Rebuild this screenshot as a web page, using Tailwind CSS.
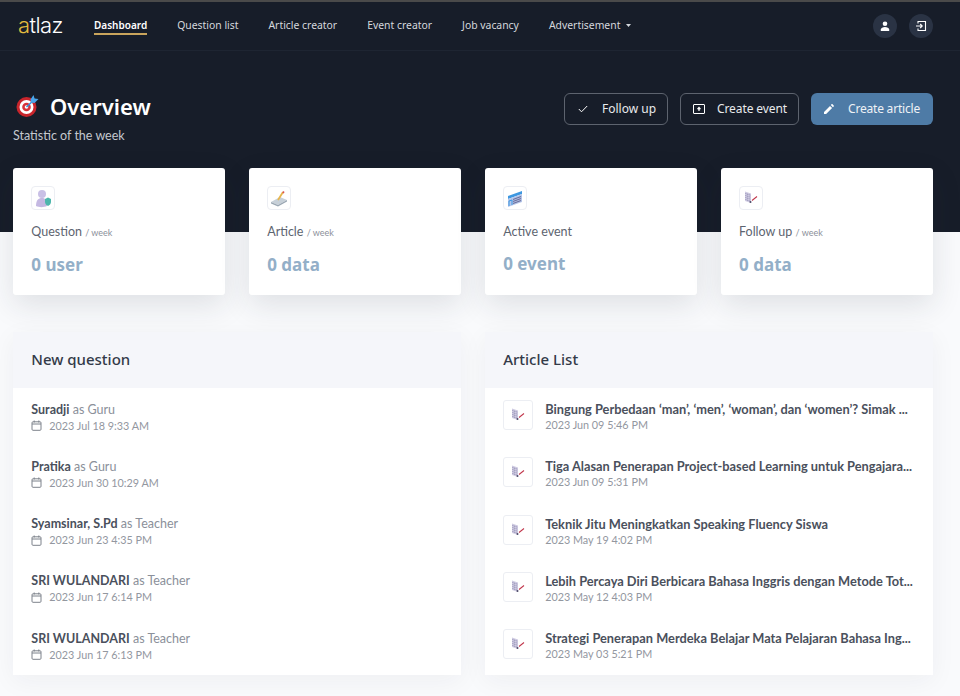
<!DOCTYPE html>
<html lang="en">
<head>
  <meta charset="UTF-8" />
  <title>Dashboard - Atlaz</title>
  <script src="https://cdn.jsdelivr.net/npm/@tailwindcss/browser@4"></script>
</head>
<body class="bg-[#f9fafc] font-['Lato',sans-serif] h-[696px] overflow-hidden">
  <!-- dark header -->
  <div class="bg-[#171d29] h-[232px] border-t-2 border-[#4a4a4a]">
    <nav class="h-[49px] flex items-center border-b border-[#1e2532] pl-[18px] pr-[27px]">
      <a class="font-['Inter',sans-serif] text-[22px] leading-none tracking-[-0.6px] font-light text-white w-[76px] -mt-[3px]"><span class="text-[#e3bd3f]">a</span>tlaz</a>
      <div class="flex items-center gap-[30px] text-[10.400px] leading-[15px] text-[#d5d8dd] font-['Noto_Sans',sans-serif] -mt-[2px]">
        <a class="relative text-[10px] font-semibold text-white">Dashboard<span class="absolute left-0 right-0 -bottom-[2px] h-[2px] bg-[#c9a45c]"></span></a>
        <a>Question list</a>
        <a>Article creator</a>
        <a>Event creator</a>
        <a>Job vacancy</a>
        <a class="flex items-center gap-[6px]">Advertisement
          <svg width="5" height="3" viewBox="0 0 5 3"><path d="M0 0h5L2.500 3z" fill="#d5d8dd"/></svg>
        </a>
      </div>
      <div class="ml-auto flex gap-[12px]">
        <button class="w-6 h-6 rounded-full bg-[#2a3344] flex items-center justify-center">
          <svg width="10" height="10" viewBox="0 0 10 10" fill="#fff"><circle cx="5" cy="2.800" r="2.300"/><path d="M0.800 10V8.400C0.800 6.900 3 6 5 6s4.200 0.900 4.200 2.400V10z"/></svg>
        </button>
        <button class="w-6 h-6 rounded-full bg-[#2a3344] flex items-center justify-center">
          <svg width="12" height="12" viewBox="0 0 12 12" fill="none" stroke="#fff" stroke-width="1.100"><path d="M3 3.500V1.500h7.500v9H3v-2"/><path d="M1 6h6M5.200 4l2 2-2 2"/></svg>
        </button>
      </div>
    </nav>

    <div class="flex justify-between items-start pl-[13px] pr-[27px] pt-[41px]">
      <div>
        <div class="flex items-center gap-[10px] pl-[3px]">
          <svg width="24" height="24" viewBox="0 0 24 24">
            <circle cx="10.500" cy="13" r="10" fill="#c9252c"/>
            <circle cx="10.500" cy="13" r="7" fill="#fff"/>
            <circle cx="10.500" cy="13" r="4.300" fill="#d8343a"/>
            <circle cx="10.500" cy="13" r="1.800" fill="#fff"/>
            <path d="M10.500 13L19 5" stroke="#3a8fd8" stroke-width="1.600"/>
            <path d="M14.500 5.500L17.500 1l1 3.500 4 .5-4 4-3.500-.5z" fill="#4aa5ea"/>
          </svg>
          <h1 class="font-['Noto_Sans',sans-serif] text-[22px] leading-[28px] font-semibold text-white">Overview</h1>
        </div>
        <p class="text-[12.500px] leading-[18px] mt-[7px] text-[#c4c8cf]">Statistic of the week</p>
      </div>
      <div class="flex gap-3 text-[12px] text-[#e8eaed] font-['Noto_Sans',sans-serif] mt-px">
        <button class="h-8 w-[104px] border border-[#5d636e] rounded-md flex items-center gap-[14px] pl-[13px]">
          <svg width="10" height="8" viewBox="0 0 10 8" fill="none" stroke="#fff" stroke-width="1"><path d="M0.800 4l2.700 2.800L9.200 1"/></svg>
          Follow up
        </button>
        <button class="h-8 w-[119px] border border-[#5d636e] rounded-md flex items-center gap-[12px] pl-[12px] tracking-[-0.1px]">
          <svg width="12" height="10" viewBox="0 0 12 10" fill="none" stroke="#fff" stroke-width="1"><rect x="0.500" y="0.500" width="11" height="9" rx="0.500"/><path d="M6 7V3.800M4.500 5.200L6 3.500l1.500 1.700" stroke-width="1.200"/></svg>
          Create event
        </button>
        <button class="h-8 w-[122px] bg-[#4e7ba6] rounded-md flex items-center gap-[14px] pl-[13px] text-[#eef2f6] tracking-[-0.2px]">
          <svg width="10" height="10" viewBox="0 0 10 10" fill="#fff"><path d="M0 10V7.900L6 1.900 8.100 4 2.100 10zM6.800 1.100L7.800 0.100a.4.4 0 0 1 .5 0L9.900 1.700a.4.4 0 0 1 0 .5L8.900 3.200z"/></svg>
          Create article
        </button>
      </div>
    </div>
  </div>

  <!-- stat cards -->
  <div class="grid grid-cols-4 gap-[24px] pl-[13.300px] pr-[27px] -mt-[64px] relative">
    <div class="bg-white rounded-[3px] h-[127px] px-[18px] pt-[18px] shadow-[0_10px_30px_rgba(30,40,60,0.12)]">
      <div class="w-6 h-6 border border-[#eceef3] rounded-[4px] flex items-center justify-center">
        <svg width="17" height="19" viewBox="0 0 17 19"><circle cx="7" cy="5" r="4" fill="#c9c0e6"/><path d="M1 17c0-6 2.500-8 6-8s5 2 5 8c-3 1.500-8 1.500-11 0z" fill="#c4b8e2"/><path d="M10 10l3-1.500 3 1.500v3c0 2-1.500 3.200-3 4-1.500-.8-3-2-3-4z" fill="#4db6ac"/></svg>
      </div>
      <p class="text-[12.500px] leading-[18px] mt-[13px] text-[#5d6470]">Question <span class="text-[9px] text-[#8b909a]">/ week</span></p>
      <p class="font-['Noto_Sans',sans-serif] text-[17px] leading-[24px] mt-[11px] font-bold text-[#93afc8]">0 user</p>
    </div>
    <div class="bg-white rounded-[3px] h-[127px] px-[18px] pt-[18px] shadow-[0_10px_30px_rgba(30,40,60,0.12)]">
      <div class="w-6 h-6 border border-[#eceef3] rounded-[4px] flex items-center justify-center">
        <svg width="18" height="18" viewBox="0 0 18 18"><path d="M1 13l9-5 7 3-9 5z" fill="#c7d0d8"/><path d="M1 13l7 3 9-5v1.500L8 17.500 1 14.500z" fill="#9aa7b3"/><path d="M8 11l5-8" stroke="#e8b64c" stroke-width="1.800"/><path d="M12.300 4l.8-2 1.500 1-1 1.500z" fill="#d9534f"/></svg>
      </div>
      <p class="text-[12.500px] leading-[18px] mt-[13px] text-[#5d6470]">Article <span class="text-[9px] text-[#8b909a]">/ week</span></p>
      <p class="font-['Noto_Sans',sans-serif] text-[17px] leading-[24px] mt-[11px] font-bold text-[#93afc8]">0 data</p>
    </div>
    <div class="bg-white rounded-[3px] h-[127px] px-[18px] pt-[18px] shadow-[0_10px_30px_rgba(30,40,60,0.12)]">
      <div class="w-6 h-6 border border-[#eceef3] rounded-[4px] flex items-center justify-center">
        <svg width="16" height="17" viewBox="0 0 16 17"><path d="M1 6l14-5v3L1 9z" fill="#3d97e0"/><path d="M1 9l14-5v8L1 17z" fill="#b5c6ea"/><path d="M6 9.500l8-3M6 11.500l8-3M6 13.500l8-3" stroke="#6c6f9c" stroke-width="1.200"/><path d="M2 16v-5l3-1v5" fill="none" stroke="#3d97e0" stroke-width="1"/></svg>
      </div>
      <p class="text-[12.500px] leading-[18px] mt-[13px] text-[#5d6470]">Active event</p>
      <p class="font-['Noto_Sans',sans-serif] text-[17px] leading-[24px] mt-[11px] font-bold text-[#93afc8]">0 event</p>
    </div>
    <div class="bg-white rounded-[3px] h-[127px] px-[18px] pt-[18px] shadow-[0_10px_30px_rgba(30,40,60,0.12)]">
      <div class="w-6 h-6 border border-[#eceef3] rounded-[4px] flex items-center justify-center">
        <svg width="16" height="16" viewBox="0 0 16 16"><path d="M2 1.500l6 2V13l-6-2z" fill="#cfcbe2"/><path d="M2.500 3.500l5 1.700M2.500 5.500l5 1.700M2.500 7.500l5 1.700M2.500 9.500l5 1.700" stroke="#8581a8" stroke-width="0.900" stroke-dasharray="1 0.700"/><path d="M9 10.500l5-4" stroke="#c0354a" stroke-width="1.100"/><circle cx="7.500" cy="12" r="1" fill="#4e4a68"/></svg>
      </div>
      <p class="text-[12.500px] leading-[18px] mt-[13px] text-[#5d6470]">Follow up <span class="text-[9px] text-[#8b909a]">/ week</span></p>
      <p class="font-['Noto_Sans',sans-serif] text-[17px] leading-[24px] mt-[11px] font-bold text-[#93afc8]">0 data</p>
    </div>
  </div>

  <!-- lists -->
  <div class="grid grid-cols-2 gap-[24px] pl-[13.300px] pr-[27px] mt-[37px]">
    <section class="shadow-[0_6px_24px_rgba(30,40,60,0.05)]">
      <h2 class="h-14 bg-[#f5f6fa] px-[18px] pb-[2px] flex items-center font-['Noto_Sans',sans-serif] text-[15px] font-medium text-[#333a48]">New question</h2>
      <div class="bg-white h-[287px] px-[18px] pt-[12.500px]">
        <div class="h-[57.250px]">
          <p class="text-[12.500px] leading-[18px] text-[#8b909a]"><b class="font-bold text-[#4a505c]">Suradji</b> as Guru</p>
          <p class="flex items-center gap-[7px] text-[10.800px] leading-[14px] text-[#93979f]"><svg width="11" height="11" viewBox="0 0 11 11" fill="none" stroke="#7d828b" stroke-width="1"><rect x="1" y="1.800" width="9" height="8.500" rx="1"/><path d="M1 4h9M3.200 0.500v2M7.800 0.500v2"/></svg>2023 Jul 18 9:33 AM</p>
        </div>
        <div class="h-[57.250px]">
          <p class="text-[12.500px] leading-[18px] text-[#8b909a]"><b class="font-bold text-[#4a505c]">Pratika</b> as Guru</p>
          <p class="flex items-center gap-[7px] text-[10.800px] leading-[14px] text-[#93979f]"><svg width="11" height="11" viewBox="0 0 11 11" fill="none" stroke="#7d828b" stroke-width="1"><rect x="1" y="1.800" width="9" height="8.500" rx="1"/><path d="M1 4h9M3.200 0.500v2M7.800 0.500v2"/></svg>2023 Jun 30 10:29 AM</p>
        </div>
        <div class="h-[57.250px]">
          <p class="text-[12.500px] leading-[18px] text-[#8b909a]"><b class="font-bold text-[#4a505c]">Syamsinar, S.Pd</b> as Teacher</p>
          <p class="flex items-center gap-[7px] text-[10.800px] leading-[14px] text-[#93979f]"><svg width="11" height="11" viewBox="0 0 11 11" fill="none" stroke="#7d828b" stroke-width="1"><rect x="1" y="1.800" width="9" height="8.500" rx="1"/><path d="M1 4h9M3.200 0.500v2M7.800 0.500v2"/></svg>2023 Jun 23 4:35 PM</p>
        </div>
        <div class="h-[57.250px]">
          <p class="text-[12.500px] leading-[18px] text-[#8b909a]"><b class="font-bold text-[#4a505c]">SRI WULANDARI</b> as Teacher</p>
          <p class="flex items-center gap-[7px] text-[10.800px] leading-[14px] text-[#93979f]"><svg width="11" height="11" viewBox="0 0 11 11" fill="none" stroke="#7d828b" stroke-width="1"><rect x="1" y="1.800" width="9" height="8.500" rx="1"/><path d="M1 4h9M3.200 0.500v2M7.800 0.500v2"/></svg>2023 Jun 17 6:14 PM</p>
        </div>
        <div class="h-[57.250px]">
          <p class="text-[12.500px] leading-[18px] text-[#8b909a]"><b class="font-bold text-[#4a505c]">SRI WULANDARI</b> as Teacher</p>
          <p class="flex items-center gap-[7px] text-[10.800px] leading-[14px] text-[#93979f]"><svg width="11" height="11" viewBox="0 0 11 11" fill="none" stroke="#7d828b" stroke-width="1"><rect x="1" y="1.800" width="9" height="8.500" rx="1"/><path d="M1 4h9M3.200 0.500v2M7.800 0.500v2"/></svg>2023 Jun 17 6:13 PM</p>
        </div>
      </div>
    </section>

    <section class="shadow-[0_6px_24px_rgba(30,40,60,0.05)] min-w-0">
      <h2 class="h-14 bg-[#f5f6fa] px-[18px] pb-[2px] flex items-center font-['Noto_Sans',sans-serif] text-[15px] font-medium text-[#333a48]">Article List</h2>
      <div class="bg-white h-[287px] px-[18px] pt-[12px]">
        <div class="h-[57.250px] flex gap-[12px]">
          <div class="w-[30px] h-[30px] shrink-0 border border-[#eceef3] rounded-[3px] flex items-center justify-center"><svg width="16" height="16" viewBox="0 0 16 16"><path d="M2 1.500l6 2V13l-6-2z" fill="#cfcbe2"/><path d="M2.500 3.500l5 1.700M2.500 5.500l5 1.700M2.500 7.500l5 1.700M2.500 9.500l5 1.700" stroke="#8581a8" stroke-width="0.900" stroke-dasharray="1 0.700"/><path d="M9 10.500l5-4" stroke="#c0354a" stroke-width="1.100"/><circle cx="7.500" cy="12" r="1" fill="#4e4a68"/></svg></div>
          <div class="min-w-0 flex-1">
            <p class="text-[12.800px] leading-[18px] font-bold text-[#4a505c] whitespace-nowrap">Bingung Perbedaan ‘man’, ‘men’, ‘woman’, dan ‘women’? Simak ...</p>
            <p class="text-[10.800px] leading-[14px] text-[#93979f]">2023 Jun 09 5:46 PM</p>
          </div>
        </div>
        <div class="h-[57.250px] flex gap-[12px]">
          <div class="w-[30px] h-[30px] shrink-0 border border-[#eceef3] rounded-[3px] flex items-center justify-center"><svg width="16" height="16" viewBox="0 0 16 16"><path d="M2 1.500l6 2V13l-6-2z" fill="#cfcbe2"/><path d="M2.500 3.500l5 1.700M2.500 5.500l5 1.700M2.500 7.500l5 1.700M2.500 9.500l5 1.700" stroke="#8581a8" stroke-width="0.900" stroke-dasharray="1 0.700"/><path d="M9 10.500l5-4" stroke="#c0354a" stroke-width="1.100"/><circle cx="7.500" cy="12" r="1" fill="#4e4a68"/></svg></div>
          <div class="min-w-0 flex-1">
            <p class="text-[12.800px] leading-[18px] font-bold text-[#4a505c] whitespace-nowrap">Tiga Alasan Penerapan Project-based Learning untuk Pengajara...</p>
            <p class="text-[10.800px] leading-[14px] text-[#93979f]">2023 Jun 09 5:31 PM</p>
          </div>
        </div>
        <div class="h-[57.250px] flex gap-[12px]">
          <div class="w-[30px] h-[30px] shrink-0 border border-[#eceef3] rounded-[3px] flex items-center justify-center"><svg width="16" height="16" viewBox="0 0 16 16"><path d="M2 1.500l6 2V13l-6-2z" fill="#cfcbe2"/><path d="M2.500 3.500l5 1.700M2.500 5.500l5 1.700M2.500 7.500l5 1.700M2.500 9.500l5 1.700" stroke="#8581a8" stroke-width="0.900" stroke-dasharray="1 0.700"/><path d="M9 10.500l5-4" stroke="#c0354a" stroke-width="1.100"/><circle cx="7.500" cy="12" r="1" fill="#4e4a68"/></svg></div>
          <div class="min-w-0 flex-1">
            <p class="text-[12.800px] leading-[18px] font-bold text-[#4a505c] whitespace-nowrap">Teknik Jitu Meningkatkan Speaking Fluency Siswa</p>
            <p class="text-[10.800px] leading-[14px] text-[#93979f]">2023 May 19 4:02 PM</p>
          </div>
        </div>
        <div class="h-[57.250px] flex gap-[12px]">
          <div class="w-[30px] h-[30px] shrink-0 border border-[#eceef3] rounded-[3px] flex items-center justify-center"><svg width="16" height="16" viewBox="0 0 16 16"><path d="M2 1.500l6 2V13l-6-2z" fill="#cfcbe2"/><path d="M2.500 3.500l5 1.700M2.500 5.500l5 1.700M2.500 7.500l5 1.700M2.500 9.500l5 1.700" stroke="#8581a8" stroke-width="0.900" stroke-dasharray="1 0.700"/><path d="M9 10.500l5-4" stroke="#c0354a" stroke-width="1.100"/><circle cx="7.500" cy="12" r="1" fill="#4e4a68"/></svg></div>
          <div class="min-w-0 flex-1">
            <p class="text-[12.800px] leading-[18px] font-bold text-[#4a505c] whitespace-nowrap">Lebih Percaya Diri Berbicara Bahasa Inggris dengan Metode Tot...</p>
            <p class="text-[10.800px] leading-[14px] text-[#93979f]">2023 May 12 4:03 PM</p>
          </div>
        </div>
        <div class="h-[57.250px] flex gap-[12px]">
          <div class="w-[30px] h-[30px] shrink-0 border border-[#eceef3] rounded-[3px] flex items-center justify-center"><svg width="16" height="16" viewBox="0 0 16 16"><path d="M2 1.500l6 2V13l-6-2z" fill="#cfcbe2"/><path d="M2.500 3.500l5 1.700M2.500 5.500l5 1.700M2.500 7.500l5 1.700M2.500 9.500l5 1.700" stroke="#8581a8" stroke-width="0.900" stroke-dasharray="1 0.700"/><path d="M9 10.500l5-4" stroke="#c0354a" stroke-width="1.100"/><circle cx="7.500" cy="12" r="1" fill="#4e4a68"/></svg></div>
          <div class="min-w-0 flex-1">
            <p class="text-[12.800px] leading-[18px] font-bold text-[#4a505c] whitespace-nowrap">Strategi Penerapan Merdeka Belajar Mata Pelajaran Bahasa Ing...</p>
            <p class="text-[10.800px] leading-[14px] text-[#93979f]">2023 May 03 5:21 PM</p>
          </div>
        </div>
      </div>
    </section>
  </div>
</body>
</html>
